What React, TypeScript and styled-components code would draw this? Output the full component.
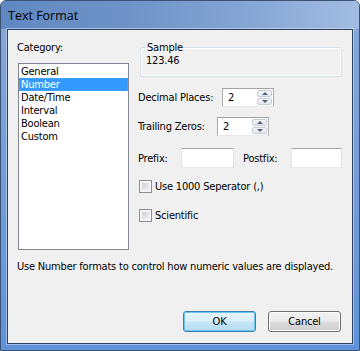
import styled, { createGlobalStyle } from 'styled-components';

const Global = createGlobalStyle`
    html, body {
        margin: 0;
        padding: 0;
        background: #ffffff;
    }
`;

const Frame = styled.div`
    width: 360px;
    height: 351px;
    box-sizing: border-box;
    border: 1px solid #3b5274;
    border-radius: 6px 6px 0 0;
    background: linear-gradient(180deg, #87a8d8 0%, #7aa1d8 35%, #5f92d9 100%);
    padding: 0 6px 6px;
    display: flex;
    flex-direction: column;
    overflow: hidden;
`;

const TitleBar = styled.div`
    height: 28px;
    margin: 0 -6px;
    padding-left: 7px;
    display: flex;
    align-items: center;
    background: linear-gradient(90deg, #6088c1 0%, #6f93c8 35%, #86a6d5 70%, #a3bde2 100%);
    font-family: "Open Sans", "Liberation Sans", sans-serif;
    font-size: 12.5px;
    color: #000;
`;

const Client = styled.div`
    flex: 1;
    display: flex;
    flex-direction: column;
    background: #f0f0f0;
    border: 1px solid #2c3f5f;
    box-shadow: 0 0 0 1px rgba(220, 232, 248, 0.55);
    font-family: "DejaVu Sans Condensed", "DejaVu Sans", sans-serif;
    font-stretch: condensed;
    font-size: 11px;
    letter-spacing: -0.2px;
    line-height: 13px;
    color: #000;
`;

const Body = styled.div`
    display: flex;
    gap: 9px;
    padding: 11px 0 0 10px;
`;

const LeftCol = styled.div`
    display: flex;
    flex-direction: column;
    width: 111px;
`;

const Label = styled.div<{ $w?: number }>`
    white-space: nowrap;
    ${(p) => (p.$w ? `width: ${p.$w}px; flex: none;` : '')}
`;

const CategoryLabel = styled(Label)`
    margin-left: -1px;
`;

const ListBox = styled.div`
    margin-top: 9px;
    height: 187px;
    box-sizing: border-box;
    border: 1px solid #828790;
    background: #fff;
    padding: 1px 0;
`;

const ListItem = styled.div<{ $selected?: boolean }>`
    height: 13px;
    padding-left: 2px;
    white-space: nowrap;
    background: ${(p) => (p.$selected ? '#3399ff' : 'transparent')};
    color: ${(p) => (p.$selected ? '#fff' : '#000')};
    outline: ${(p) => (p.$selected ? '1px dotted #d68a2e' : 'none')};
    outline-offset: -1px;
`;

const RightCol = styled.div`
    display: flex;
    flex-direction: column;
    width: 204px;
`;

const Group = styled.fieldset`
    margin: 0 0 0 2px;
    width: 202px;
    box-sizing: border-box;
    border: 1px solid #d5dfe5;
    border-radius: 3px;
    padding: 0 5px 9px;
    box-shadow: inset 0 0 0 1px #fff;
`;

const Legend = styled.legend`
    padding: 0 1px;
    line-height: 13px;
`;

const Row = styled.div<{ $top: number }>`
    display: flex;
    align-items: center;
    margin-top: ${(p) => p.$top}px;
`;

const Spinner = styled.div`
    width: 52px;
    height: 19px;
    box-sizing: border-box;
    border: 1px solid #abadb3;
    border-top-color: #a0a3aa;
    border-bottom-color: #e3e9ef;
    background: #fff;
    display: flex;
`;

const SpinValue = styled.div`
    flex: 1;
    padding-left: 5px;
    display: flex;
    align-items: center;
`;

const SpinButtons = styled.div`
    width: 15px;
    padding: 1px 1px 1px 0;
    display: flex;
    flex-direction: column;
    gap: 1px;
`;

const SpinButton = styled.div<{ $down?: boolean }>`
    height: 7px;
    box-sizing: border-box;
    border: 1px solid #c6ccd6;
    border-radius: 2px;
    background: linear-gradient(180deg, #f4f5f7 0%, #e4e7ec 100%);
    display: flex;
    align-items: center;
    justify-content: center;
    &::after {
        content: '';
        width: 0;
        height: 0;
        border-left: 3px solid transparent;
        border-right: 3px solid transparent;
        ${(p) => (p.$down ? 'border-top: 3px solid #4c5f80;' : 'border-bottom: 3px solid #4c5f80;')}
    }
`;

const TextBox = styled.div<{ $w: number }>`
    width: ${(p) => p.$w}px;
    height: 20px;
    box-sizing: border-box;
    border: 1px solid #abadb3;
    border-top-color: #a0a3aa;
    border-bottom-color: #e3e9ef;
    border-left-color: #e2e3ea;
    border-right-color: #dbdfe6;
    background: #fff;
`;

const Gap = styled.div<{ $w: number }>`
    width: ${(p) => p.$w}px;
    flex: none;
`;

const Check = styled.div`
    margin-left: 1px;
    width: 13px;
    height: 13px;
    box-sizing: border-box;
    border: 1px solid #8e8f8f;
    background: #f4f4f4;
    padding: 2px;
    margin-right: 3px;
    &::after {
        content: '';
        display: block;
        width: 7px;
        height: 7px;
        background: linear-gradient(135deg, #cbcfd5 0%, #e4e5e7 60%, #f2f2f2 100%);
    }
`;

const Hint = styled.div`
    margin: 10px 0 0 9px;
    white-space: nowrap;
`;

const Footer = styled.div`
    margin-top: auto;
    display: flex;
    justify-content: flex-end;
    gap: 12px;
    padding: 0 11px 11px 0;
`;

const Button = styled.div<{ $default?: boolean }>`
    width: 73px;
    height: 21px;
    box-sizing: border-box;
    border-radius: 3px;
    display: flex;
    align-items: center;
    justify-content: center;
    border: 1px solid ${(p) => (p.$default ? '#3c7fb1' : '#707070')};
    background: ${(p) =>
        p.$default
            ? 'linear-gradient(180deg, #e8f5fc 0%, #dbeffa 48%, #c4e5f6 52%, #b6dcf1 100%)'
            : 'linear-gradient(180deg, #f2f2f2 0%, #ebebeb 48%, #dddddd 52%, #cfcfcf 100%)'};
    box-shadow: inset 0 0 0 1px ${(p) => (p.$default ? '#6ec6ef' : '#fcfcfc')};
`;

const categories = ['General', 'Number', 'Date/Time', 'Interval', 'Boolean', 'Custom'];

export default function App() {
    return (
        <>
            <Global />
            <Frame>
                <TitleBar>Text Format</TitleBar>
                <Client>
                    <Body>
                        <LeftCol>
                            <CategoryLabel>Category:</CategoryLabel>
                            <ListBox>
                                {categories.map((c) => (
                                    <ListItem key={c} $selected={c === 'Number'}>{c}</ListItem>
                                ))}
                            </ListBox>
                        </LeftCol>
                        <RightCol>
                            <Group>
                                <Legend>Sample</Legend>
                                <div>123.46</div>
                            </Group>
                            <Row $top={11}>
                                <Label $w={84}>Decimal Places:</Label>
                                <Spinner>
                                    <SpinValue>2</SpinValue>
                                    <SpinButtons>
                                        <SpinButton />
                                        <SpinButton $down />
                                    </SpinButtons>
                                </Spinner>
                            </Row>
                            <Row $top={10}>
                                <Label $w={79}>Trailing Zeros:</Label>
                                <Spinner>
                                    <SpinValue>2</SpinValue>
                                    <SpinButtons>
                                        <SpinButton />
                                        <SpinButton $down />
                                    </SpinButtons>
                                </Spinner>
                            </Row>
                            <Row $top={12}>
                                <Label $w={43}>Prefix:</Label>
                                <TextBox $w={53} />
                                <Gap $w={9} />
                                <Label $w={48}>Postfix:</Label>
                                <TextBox $w={51} />
                            </Row>
                            <Row $top={12}>
                                <Check />
                                <Label>Use 1000 Seperator (,)</Label>
                            </Row>
                            <Row $top={16}>
                                <Check />
                                <Label>Scientific</Label>
                            </Row>
                        </RightCol>
                    </Body>
                    <Hint>Use Number formats to control how numeric values are displayed.</Hint>
                    <Footer>
                        <Button $default>OK</Button>
                        <Button>Cancel</Button>
                    </Footer>
                </Client>
            </Frame>
        </>
    );
}
